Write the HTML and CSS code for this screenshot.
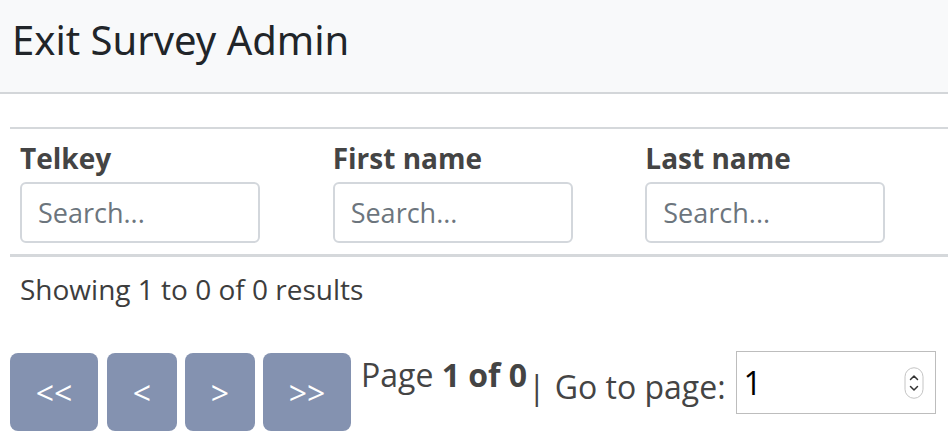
FILE: index.html
```html
<!DOCTYPE html>
<html lang="en">
<head>
<meta charset="utf-8">
<title>Exit Survey Admin</title>
<link rel="stylesheet" href="styles.css">
</head>
<body>
<header class="topbar">
  <h1 class="title">Exit Survey Admin</h1>
</header>
<main class="content">
  <table class="grid">
    <thead>
      <tr>
        <th class="col"><div class="label">Telkey</div><input class="search" type="text" placeholder="Search..."></th>
        <th class="col"><div class="label">First name</div><input class="search" type="text" placeholder="Search..."></th>
        <th class="col"><div class="label">Last name</div><input class="search" type="text" placeholder="Search..."></th>
        <th class="col-rest"></th>
      </tr>
    </thead>
  </table>
  <p class="summary">Showing 1 to 0 of 0 results</p>
  <div class="pager">
    <button class="pbtn wide first">&lt;&lt;</button>
    <button class="pbtn">&lt;</button>
    <button class="pbtn">&gt;</button>
    <button class="pbtn wide">&gt;&gt;</button>
    <span class="pageinfo">Page <b>1 of 0</b></span>
    <span class="pipe">|</span>
    <span class="goto">Go to page:</span>
    <div class="numbox">
      <input class="numinput" type="text" value="1">
      <svg class="spin" width="20" height="32" viewBox="0 0 20 32" aria-hidden="true">
        <rect x="1" y="0.75" width="18" height="30.5" rx="9" fill="#fff" stroke="#c4c4c4" stroke-width="1"/>
        <path d="M6.5 12.5 L10 9 L13.5 12.5" fill="none" stroke="#333" stroke-width="1.5" stroke-linecap="round" stroke-linejoin="round"/>
        <path d="M6.5 19.5 L10 23 L13.5 19.5" fill="none" stroke="#333" stroke-width="1.5" stroke-linecap="round" stroke-linejoin="round"/>
      </svg>
    </div>
  </div>
</main>
</body>
</html>
```
FILE: styles.css
```css
html, body {
  margin: 0;
  padding: 0;
  background: #fff;
}
body {
  font-family: "Open Sans", "Noto Sans", sans-serif;
  color: #444;
  overflow: hidden;
}
.topbar {
  background: #f8f9fa;
  border-bottom: 2px solid #d3d6d9;
  height: 94px;
  box-sizing: border-box;
  padding: 0 0 0 12px;
  display: flex;
  align-items: center;
}
.title {
  margin: 0;
  font-family: "Noto Sans", sans-serif;
  font-size: 40px;
  font-weight: 400;
  color: #212529;
  line-height: 1;
  padding-bottom: 12px;
}
.content {
  padding: 33px 0 0 10px;
}
.grid {
  border-collapse: collapse;
  width: 938px;
  border-top: 2px solid #d5d8db;
  border-bottom: 3px solid #d5d8db;
}
.col {
  width: 293px;
  padding: 13px 10px 11px 10px;
  text-align: left;
  vertical-align: top;
}
.col-rest {
  padding: 0;
}
.label {
  font-size: 28px;
  font-weight: 700;
  color: #444;
  line-height: 32px;
  margin-bottom: 8px;
}
.search {
  display: block;
  box-sizing: border-box;
  width: 240px;
  height: 61px;
  border: 2px solid #d3d7dc;
  border-radius: 6px;
  padding: 0 16px;
  font-family: "Open Sans", "Noto Sans", sans-serif;
  font-size: 27px;
  color: #333;
  background: #fff;
  outline: none;
}
.search::placeholder {
  color: #6c757d;
}
.summary {
  margin: 14px 0 0 10px;
  font-size: 28px;
  line-height: 36px;
  color: #3d3d3d;
}
.pager {
  display: flex;
  align-items: flex-start;
  gap: 8px;
  margin-top: 46px;
}
.pbtn {
  width: 70px;
  height: 78px;
  border: 0;
  border-radius: 8px;
  background: #8492b0;
  color: #fff;
  font-family: "Open Sans", "Noto Sans", sans-serif;
  font-size: 32px;
  padding: 0;
}
.pbtn.wide {
  width: 88px;
}
.pbtn.first {
  margin-right: 1px;
}
.pageinfo, .goto, .pipe {
  font-size: 32px;
  line-height: 44px;
  color: #444;
  margin-top: 0;
}
.pageinfo {
  margin-left: 2px;
}
.pipe {
  margin-left: -7px;
  margin-top: 12px;
}
.goto {
  margin-left: 1px;
  margin-top: 12px;
}
.numbox {
  display: flex;
  align-items: center;
  box-sizing: border-box;
  width: 200px;
  height: 63px;
  border: 1px solid #bdbdbd;
  margin-left: 2px;
  margin-top: -2px;
  padding: 0 11px 0 7px;
}
.numinput {
  flex: 1;
  min-width: 0;
  border: 0;
  outline: none;
  padding: 0;
  font-family: "Open Sans", "Noto Sans", sans-serif;
  font-size: 32px;
  color: #000;
  background: transparent;
}
.spin {
  flex: none;
}
```
